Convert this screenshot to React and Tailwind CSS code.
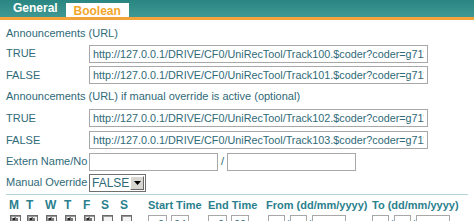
import React from "react";

const url = (n) => `http://127.0.0.1/DRIVE/CF0/UniRecTool/Track${n}.$coder?coder=g711`;

function UrlRow({ label, n, h }) {
  return (
    <div className={`flex items-center ${h}`}>
      <div className="w-[83px] shrink-0">{label}</div>
      <input
        readOnly
        value={url(n)}
        className="h-[18px] w-[339px] border border-[#a8a8a8] bg-white px-[3px] text-[10.8px] text-[#2f6a78] outline-none font-['Liberation_Sans',Arial,sans-serif]"
      />
    </div>
  );
}

function Box({ w, value = "", align = "text-center" }) {
  return (
    <div className={`h-[18px] ${w} shrink-0 border border-[#a8a8a8] bg-white text-[11px] leading-[16px] ${align} px-[2px] text-[#2f6a78]`}>
      {value}
    </div>
  );
}

function Check({ checked }) {
  return (
    <div className="w-[11px] h-[11px] border border-[#6b6b6b] bg-[#f4f4f4] shadow-[inset_1px_1px_0_#9a9a9a] flex items-start justify-center">
      {checked && (
        <svg width="7" height="7" viewBox="0 0 7 7" className="mt-[1px]">
          <path d="M1 1 L1 5 M1 3 L3 1 L3 5 M5 1 L5 5" stroke="#222" strokeWidth="1.2" fill="none" />
        </svg>
      )}
    </div>
  );
}

export default function App() {
  const days = ["M", "T", "W", "T", "F", "S", "S"];
  const lefts = ["w-[17px]", "w-[19px]", "w-[19px]", "w-[19px]", "w-[18px]", "w-[19px]", "w-[19px]"];
  return (
    <div className="w-[474px] h-[221px] overflow-hidden bg-white text-[11px] text-[#2f6a78] font-['Liberation_Sans',Arial,sans-serif]">
      {/* tab bar */}
      <div className="h-[17px] bg-gradient-to-b from-[#2a8682] to-[#3e9792] flex items-end pl-[13px]">
        <div className="h-[17px] flex items-center text-white font-bold text-[12px] pb-[1px]">General</div>
        <div className="ml-[8px] h-[14px] w-[63px] bg-white flex items-center justify-center text-[#f2a62a] font-bold text-[12px] pt-[2px]">
          Boolean
        </div>
      </div>
      <div className="h-[3px] bg-[#f2a43a]" />

      <div className="pl-[6px] pt-[3px]">
        <div className="h-[20px] flex items-center">Announcements (URL)</div>
        <UrlRow label="TRUE" n={100} h="h-[21px]" />
        <UrlRow label="FALSE" n={101} h="h-[22px]" />
        <div className="h-[21px] flex items-center">Announcements (URL) if manual override is active (optional)</div>
        <UrlRow label="TRUE" n={102} h="h-[22px]" />
        <UrlRow label="FALSE" n={103} h="h-[22px]" />
        <div className="h-[21px] flex items-center">
          <div className="w-[83px] shrink-0 whitespace-nowrap">Extern Name/No</div>
          <Box w="w-[129px]" />
          <span className="mx-[3px]">/</span>
          <Box w="w-[129px]" />
        </div>
        <div className="h-[21px] flex items-center">
          <div className="w-[83px] shrink-0 whitespace-nowrap">Manual Override</div>
          <div className="h-[18px] w-[57px] border border-[#6f6f6f] bg-white flex items-center justify-between pl-[2px] pr-[1px]">
            <span className="text-[12px] leading-none">FALSE</span>
            <div className="w-[14px] h-[14px] bg-[#d8d6d0] border border-t-white border-l-white border-r-[#666] border-b-[#666] flex items-center justify-center">
              <svg width="7" height="4" viewBox="0 0 7 4">
                <path d="M0 0 L7 0 L3.5 4 Z" fill="#000" />
              </svg>
            </div>
          </div>
        </div>
        <div className="mt-[1px] h-px bg-[#b3d3d6] mr-[6px]" />
        <div className="flex pl-[3px] font-bold text-[#2b7f8e] whitespace-nowrap">
          <div className="flex flex-col">
            <div className="flex h-[20px] items-center">
              {days.map((d, i) => (
                <div key={i} className={`${lefts[i]} text-[12px]`}>{d}</div>
              ))}
            </div>
            <div className="flex">
              {days.map((d, i) => (
                <div key={i} className={`${lefts[i]} pl-[1px]`}>
                  <Check checked={i < 5} />
                </div>
              ))}
            </div>
          </div>
          <div className="ml-[9px] w-[60px] flex flex-col">
            <div className="h-[20px] flex items-center text-[11px]">Start Time</div>
            <div className="flex gap-[4px] font-normal">
              <Box w="w-[19px]" value="0" align="text-right" />
              <Box w="w-[18px]" value="04" align="text-left" />
            </div>
          </div>
          <div className="w-[58px] flex flex-col">
            <div className="h-[20px] flex items-center text-[11px]">End Time</div>
            <div className="flex gap-[4px] font-normal">
              <Box w="w-[19px]" value="0" align="text-right" />
              <Box w="w-[18px]" value="00" align="text-left" />
            </div>
          </div>
          <div className="w-[106px] flex flex-col">
            <div className="h-[20px] flex items-center text-[11px]">From (dd/mm/yyyy)</div>
            <div className="flex items-center font-normal pl-[2px]">
              <Box w="w-[17px]" />
              <span className="mx-[1px]">/</span>
              <Box w="w-[17px]" />
              <span className="mx-[1px]">/</span>
              <Box w="w-[34px]" />
            </div>
          </div>
          <div className="flex flex-col">
            <div className="h-[20px] flex items-center text-[11px]">To (dd/mm/yyyy)</div>
            <div className="flex items-center font-normal">
              <Box w="w-[17px]" />
              <span className="mx-[1px]">/</span>
              <Box w="w-[17px]" />
              <span className="mx-[1px]">/</span>
              <Box w="w-[34px]" />
            </div>
          </div>
        </div>
      </div>
    </div>
  );
}
